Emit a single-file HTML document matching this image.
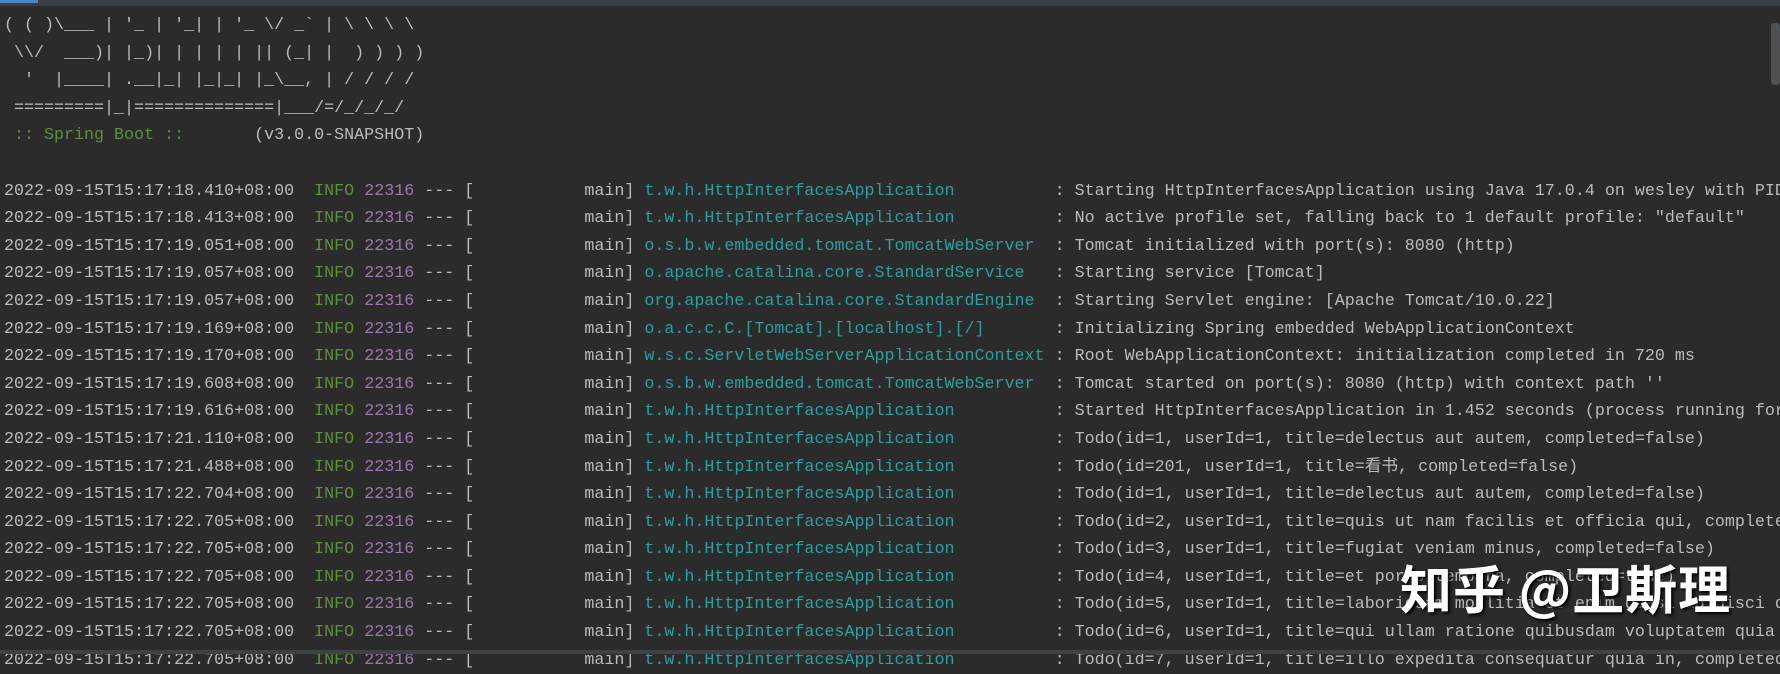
<!DOCTYPE html>
<html><head><meta charset="utf-8"><style>
html,body{margin:0;padding:0;}
body{width:1780px;height:663px;overflow:hidden;background:#2b2b2b;position:relative;font-family:"Liberation Mono","Noto Sans CJK SC",monospace;}
.top{position:absolute;left:0;top:0;width:1780px;height:6px;background:#3c3f41;}
.tab{position:absolute;left:0;top:0;width:38px;height:3px;background:#4a88c7;}
pre{position:absolute;left:4px;top:12px;margin:0;font-family:"Liberation Mono","Noto Sans CJK SC",monospace;font-size:16.68px;line-height:27.6px;color:#bbbbbb;white-space:pre;}
.g{color:#5e8f3d}.p{color:#9d76b0}.c{color:#2aa0a0}
.sb{position:absolute;right:0;top:23px;width:9px;height:62px;background:#4e5254;border-radius:3px;}
.hb{position:absolute;left:0;top:650px;width:1780px;height:4px;background:#3f4244;}
.wm{position:absolute;left:1400px;top:549px;font-family:"Noto Sans CJK SC",sans-serif;font-size:52px;font-weight:bold;color:#fff;text-shadow:2px 2px 3px #000;white-space:nowrap;letter-spacing:1px;}
</style></head><body>
<div class="top"></div><div class="tab"></div>
<pre>( ( )\___ | '_ | '_| | '_ \/ _` | \ \ \ \
 \\/  ___)| |_)| | | | | || (_| |  ) ) ) )
  '  |____| .__|_| |_|_| |_\__, | / / / /
 =========|_|==============|___/=/_/_/_/
<span class="g"> :: Spring Boot ::</span>       (v3.0.0-SNAPSHOT)

2022-09-15T15:17:18.410+08:00  <span class="g">INFO</span> <span class="p">22316</span> --- [           main] <span class="c">t.w.h.HttpInterfacesApplication         </span> : Starting HttpInterfacesApplication using Java 17.0.4 on wesley with PID
2022-09-15T15:17:18.413+08:00  <span class="g">INFO</span> <span class="p">22316</span> --- [           main] <span class="c">t.w.h.HttpInterfacesApplication         </span> : No active profile set, falling back to 1 default profile: "default"
2022-09-15T15:17:19.051+08:00  <span class="g">INFO</span> <span class="p">22316</span> --- [           main] <span class="c">o.s.b.w.embedded.tomcat.TomcatWebServer </span> : Tomcat initialized with port(s): 8080 (http)
2022-09-15T15:17:19.057+08:00  <span class="g">INFO</span> <span class="p">22316</span> --- [           main] <span class="c">o.apache.catalina.core.StandardService  </span> : Starting service [Tomcat]
2022-09-15T15:17:19.057+08:00  <span class="g">INFO</span> <span class="p">22316</span> --- [           main] <span class="c">org.apache.catalina.core.StandardEngine </span> : Starting Servlet engine: [Apache Tomcat/10.0.22]
2022-09-15T15:17:19.169+08:00  <span class="g">INFO</span> <span class="p">22316</span> --- [           main] <span class="c">o.a.c.c.C.[Tomcat].[localhost].[/]      </span> : Initializing Spring embedded WebApplicationContext
2022-09-15T15:17:19.170+08:00  <span class="g">INFO</span> <span class="p">22316</span> --- [           main] <span class="c">w.s.c.ServletWebServerApplicationContext</span> : Root WebApplicationContext: initialization completed in 720 ms
2022-09-15T15:17:19.608+08:00  <span class="g">INFO</span> <span class="p">22316</span> --- [           main] <span class="c">o.s.b.w.embedded.tomcat.TomcatWebServer </span> : Tomcat started on port(s): 8080 (http) with context path ''
2022-09-15T15:17:19.616+08:00  <span class="g">INFO</span> <span class="p">22316</span> --- [           main] <span class="c">t.w.h.HttpInterfacesApplication         </span> : Started HttpInterfacesApplication in 1.452 seconds (process running for
2022-09-15T15:17:21.110+08:00  <span class="g">INFO</span> <span class="p">22316</span> --- [           main] <span class="c">t.w.h.HttpInterfacesApplication         </span> : Todo(id=1, userId=1, title=delectus aut autem, completed=false)
2022-09-15T15:17:21.488+08:00  <span class="g">INFO</span> <span class="p">22316</span> --- [           main] <span class="c">t.w.h.HttpInterfacesApplication         </span> : Todo(id=201, userId=1, title=看书, completed=false)
2022-09-15T15:17:22.704+08:00  <span class="g">INFO</span> <span class="p">22316</span> --- [           main] <span class="c">t.w.h.HttpInterfacesApplication         </span> : Todo(id=1, userId=1, title=delectus aut autem, completed=false)
2022-09-15T15:17:22.705+08:00  <span class="g">INFO</span> <span class="p">22316</span> --- [           main] <span class="c">t.w.h.HttpInterfacesApplication         </span> : Todo(id=2, userId=1, title=quis ut nam facilis et officia qui, completed
2022-09-15T15:17:22.705+08:00  <span class="g">INFO</span> <span class="p">22316</span> --- [           main] <span class="c">t.w.h.HttpInterfacesApplication         </span> : Todo(id=3, userId=1, title=fugiat veniam minus, completed=false)
2022-09-15T15:17:22.705+08:00  <span class="g">INFO</span> <span class="p">22316</span> --- [           main] <span class="c">t.w.h.HttpInterfacesApplication         </span> : Todo(id=4, userId=1, title=et porro tempora, completed=true)
2022-09-15T15:17:22.705+08:00  <span class="g">INFO</span> <span class="p">22316</span> --- [           main] <span class="c">t.w.h.HttpInterfacesApplication         </span> : Todo(id=5, userId=1, title=laboriosam mollitia et enim quasi adipisci q
2022-09-15T15:17:22.705+08:00  <span class="g">INFO</span> <span class="p">22316</span> --- [           main] <span class="c">t.w.h.HttpInterfacesApplication         </span> : Todo(id=6, userId=1, title=qui ullam ratione quibusdam voluptatem quia
2022-09-15T15:17:22.705+08:00  <span class="g">INFO</span> <span class="p">22316</span> --- [           main] <span class="c">t.w.h.HttpInterfacesApplication         </span> : Todo(id=7, userId=1, title=illo expedita consequatur quia in, completed
</pre>
<div class="hb"></div>
<div class="sb"></div>
<div class="wm">知乎 @卫斯理</div>
</body></html>
